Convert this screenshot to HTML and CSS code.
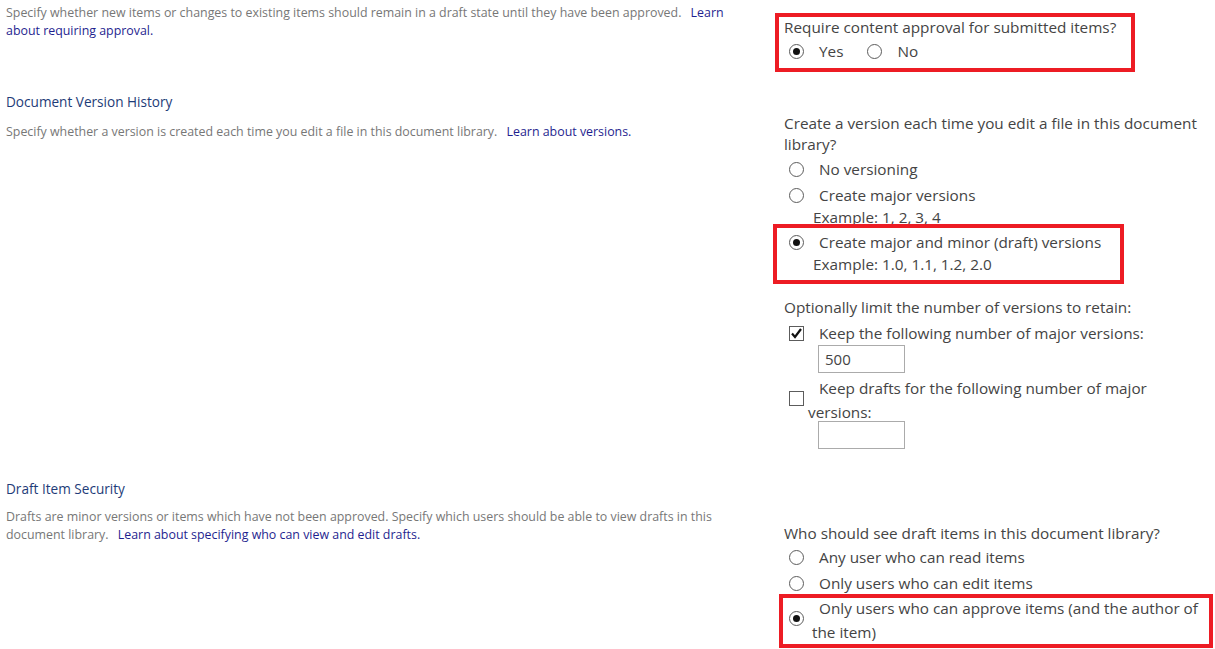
FILE: index.html
```html
<html>
<head>
  <title>Versioning Settings</title>
  <meta name="viewport" content="width=device-width, initial-scale=1">
  <link rel="stylesheet" href="styles.css">
</head>
<body>
  <div class="page">

    <div class="section approval">
      <div class="info">
        <p class="desc">Specify whether new items or changes to existing items should remain in a draft state until they have been approved. <a href="#">Learn about requiring approval.</a></p>
      </div>
      <div class="controls">
        <div class="mark mark-approval">
          <div class="question">Require content approval for submitted items?</div>
          <div class="opt">
            <label class="inline"><span class="radio on"></span>Yes</label>
            <label class="inline"><span class="radio"></span>No</label>
          </div>
        </div>
      </div>
    </div>

    <div class="section versions">
      <div class="info">
        <h3>Document Version History</h3>
        <p class="desc">Specify whether a version is created each time you edit a file in this document library. <a href="#">Learn about versions.</a></p>
      </div>
      <div class="controls">
        <div class="question">Create a version each time you edit a file in this document library?</div>
        <div class="opt first"><span class="radio"></span>No versioning</div>
        <div class="opt"><span class="radio"></span>Create major versions</div>
        <div class="example">Example: 1, 2, 3, 4</div>
        <div class="mark mark-minor">
          <div class="opt"><span class="radio on"></span>Create major and minor (draft) versions</div>
          <div class="example">Example: 1.0, 1.1, 1.2, 2.0</div>
        </div>
        <div class="question limit">Optionally limit the number of versions to retain:</div>
        <div class="opt"><span class="check on"><svg width="13" height="13" viewBox="0 0 13 13"><polyline points="2,6.5 5,10 11,2" fill="none" stroke="#111" stroke-width="2.2"/></svg></span>Keep the following number of major versions:</div>
        <input class="num" type="text" value="500">
        <div class="opt check-wrap"><span class="check low"></span>Keep drafts for the following number of major versions:</div>
        <input class="num" type="text" value="">
      </div>
    </div>

    <div class="section drafts">
      <div class="info">
        <h3>Draft Item Security</h3>
        <p class="desc">Drafts are minor versions or items which have not been approved. Specify which users should be able to view drafts in this document library. <a href="#">Learn about specifying who can view and edit drafts.</a></p>
      </div>
      <div class="controls">
        <div class="question">Who should see draft items in this document library?</div>
        <div class="opt first"><span class="radio"></span>Any user who can read items</div>
        <div class="opt"><span class="radio"></span>Only users who can edit items</div>
        <div class="mark mark-author">
          <div class="opt"><span class="radio on low"></span>Only users who can approve items (and the author of the item)</div>
        </div>
      </div>
    </div>

  </div>
</body>
</html>
```

FILE: styles.css
```css
body { margin: 0; background: #fff; color: #444; font-family: "Open Sans", "Noto Sans", sans-serif; }
.page { padding-left: 6px; }

.section { display: grid; grid-template-columns: 769px 1fr; }
.approval { margin-bottom: 21px; }
.versions { margin-bottom: 32px; }

/* left column */
.approval .info { padding-top: 4px; }
.info h3 { margin: 0; font-size: 13.6px; font-weight: normal; line-height: 18px; color: #1e3c78; }
.desc { margin: 0; width: 742px; font-size: 12.4px; line-height: 18px; color: #777; }
.desc a { margin-left: 6px; color: #1f1f8f; text-decoration: none; }
.versions .desc { margin-top: 12px; }
.drafts .info { margin-top: -1px; }
.drafts .desc { margin-top: 10px; }

/* right column */
.controls { padding: 0 6px 0 9px; font-size: 15.3px; line-height: 21px; }
.approval .controls { padding-top: 13px; }
.versions .controls { padding-top: 20px; }
.drafts .controls { padding-top: 42px; }

.opt { margin-top: 5px; padding-left: 28px; text-indent: -23px; }
.opt.first { margin-top: 4px; }
.drafts .opt.first { margin-top: 3px; }
.check-wrap { padding-left: 24px; text-indent: -19px; }
.inline { margin-right: 20px; }
.example { margin-top: 1px; padding-left: 29px; }
.question.limit { margin-top: 13px; }

.radio, .check { display: inline-block; box-sizing: border-box; width: 15px; height: 15px; margin-right: 15px; border: 1px solid #5c5c5c; background: #fff; vertical-align: -2px; text-indent: 0; }
.radio { border-radius: 50%; position: relative; }
.radio.on::after { content: ""; position: absolute; left: 3px; top: 3px; width: 7px; height: 7px; border-radius: 50%; background: #111; }
.check svg { display: block; margin: 0; }
.radio.low, .check.low { vertical-align: -8px; margin-bottom: -4px; }

.num { display: block; box-sizing: border-box; width: 87px; height: 28px; margin: 1px 0 0 34px; padding: 0 6px; border: 1px solid #ababab; font: 15px "Open Sans", "Noto Sans", sans-serif; color: #444; }
.check-wrap + .num { margin-top: -2px; }

/* red annotation boxes */
.mark { position: relative; box-sizing: border-box; border: 4px solid #ed1c24; }
.mark-approval { width: 360px; margin-left: -9px; padding: 0 0 6px 5px; }
.mark-approval .opt { margin-top: 3px; }
.mark-minor { width: 351px; margin: -4px 0 0 -11px; padding: 4px 0 5px 7px; }
.mark-minor .opt { margin-top: 0; }
.mark-author { width: 434px; margin-left: -5px; padding: 0 0 1px 1px; }
.mark-author .opt { margin-top: 0; }
```
